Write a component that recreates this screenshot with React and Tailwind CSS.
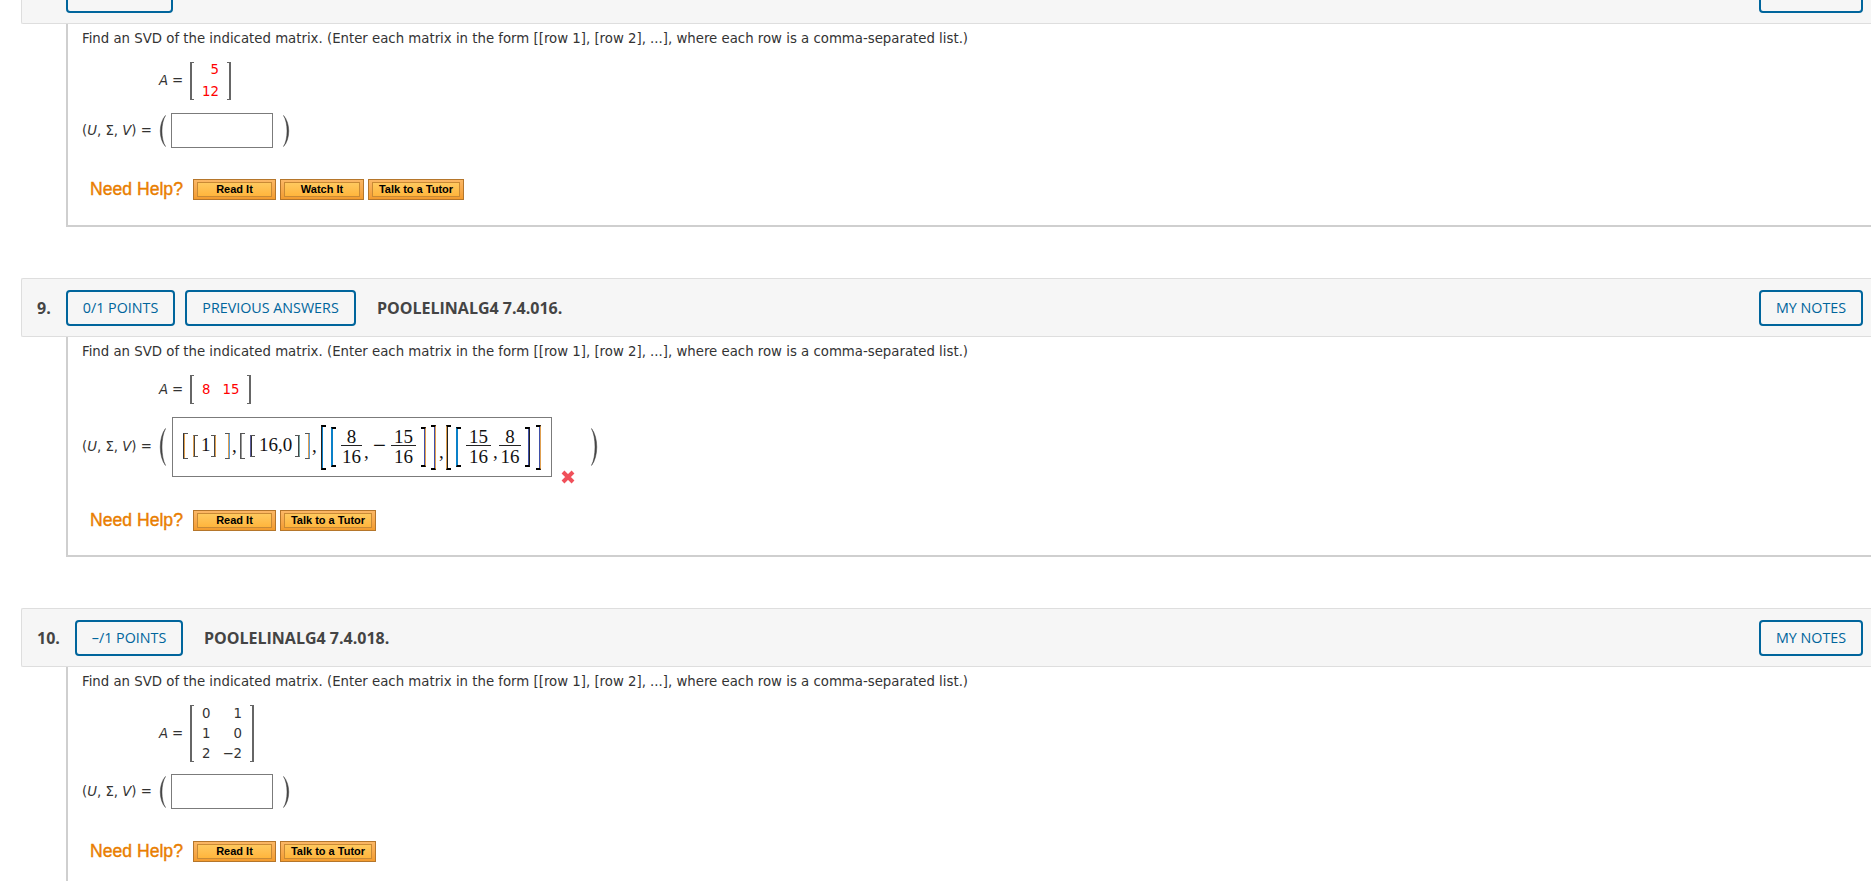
const sans = "font-['Open_Sans',sans-serif]";
const verdana = "font-['DejaVu_Sans',sans-serif]";

function OutlineButton({ children, className = "" }) {
  return (
    <div
      className={`h-[36px] flex items-center justify-center border-2 border-[#00659c] rounded-[4px] text-[#00659c] text-[14.3px] font-medium ${className}`}
    >
      {children}
    </div>
  );
}

function Header({ number, buttons, title, notes = "MY NOTES" }) {
  return (
    <div
      className={`h-[59px] ml-[21px] flex items-center bg-[#f6f6f6] border-t border-l border-b border-[#dedede] rounded-l-[2px] ${sans}`}
    >
      <div className="w-[44px] pl-[15px] text-[16px] font-bold text-[#444]">{number}</div>
      <div className="flex gap-[10px]">
        {buttons.map((b) => (
          <OutlineButton key={b.label} className={b.width}>
            {b.label}
          </OutlineButton>
        ))}
      </div>
      <div className="ml-[21px] text-[16px] font-bold text-[#444]">{title}</div>
      <OutlineButton className="ml-auto mr-[8px] w-[104px]">{notes}</OutlineButton>
    </div>
  );
}

function HelpButton({ label, width }) {
  return (
    <div className={`h-[21px] px-[3px] py-[2px] border border-[#b5762b] bg-gradient-to-b from-[#fbb765] to-[#f39c2d] ${width}`}>
      <div className="h-full flex items-center justify-center border border-[#c98a35] bg-gradient-to-b from-[#ffc95e] to-[#ffb53c] text-[11px] font-bold text-black font-['Liberation_Sans',sans-serif]">
        {label}
      </div>
    </div>
  );
}

function NeedHelp({ buttons }) {
  return (
    <div className="flex items-center ml-[22px]">
      <div className="w-[103px] text-[17.6px] leading-[21px] [-webkit-text-stroke:0.4px_#e97e00] font-['Liberation_Sans',sans-serif] text-[#e97e00]">
        Need Help?
      </div>
      <div className="flex gap-[4px]">
        {buttons.map((b) => (
          <HelpButton key={b.label} label={b.label} width={b.width} />
        ))}
      </div>
    </div>
  );
}

function Matrix({ rows, red, height, rowGap = "gap-y-[4px]" }) {
  return (
    <div className="flex items-stretch" style={{ height }}>
      <div className="w-[4px] border-l-2 border-t border-b border-[#666]" />
      <div
        className={`grid gap-x-[12px] ${rowGap} content-center items-center justify-items-end px-[8px] text-[13.3px] leading-[16px] ${red ? "text-[#f00]" : "text-[#333]"}`}
        style={{ gridTemplateColumns: `repeat(${rows[0].length}, auto)` }}
      >
        {rows.flat().map((c, i) => (
          <span key={i}>{c}</span>
        ))}
      </div>
      <div className="w-[4px] border-r-2 border-t border-b border-[#666]" />
    </div>
  );
}

function MatrixLine({ children }) {
  return (
    <div className="flex items-center pl-[91px] text-[13.3px] text-[#333]">
      <span className="italic w-[9px] mr-[4px]">A</span>
      <span className="w-[11px] mr-[7px]">=</span>
      {children}
    </div>
  );
}

function Paren({ side, height = 32 }) {
  const d =
    side === "l"
      ? "M8.5 0.5 C1.5 9 1.5 27 8.5 35.5 C3.8 27 3.8 9 8.5 0.5 Z"
      : "M1.5 0.5 C8.5 9 8.5 27 1.5 35.5 C6.2 27 6.2 9 1.5 0.5 Z";
  return (
    <svg width="10" height={height} viewBox="0 0 10 36" preserveAspectRatio="none" className="shrink-0">
      <path d={d} fill="#444" stroke="#444" strokeWidth="0.5" />
    </svg>
  );
}

function UsvLabel() {
  return (
    <span className="w-[75px] shrink-0 text-[13.3px] text-[#333] whitespace-nowrap">
      (<i>U</i>, Σ, <i>V</i>) =
    </span>
  );
}

function EmptyAnswer() {
  return (
    <div className="flex items-center">
      <UsvLabel />
      <Paren side="l" />
      <div className="w-[102px] h-[35px] ml-[4px] border border-[#7b7b7b] bg-white" />
      <div className="ml-[9px]"><Paren side="r" /></div>
    </div>
  );
}

// bracket stem is two 1px columns, to get the coloured fringe the picture has
function Bracket({ side, c, h, thick = false, className = "" }) {
  const caps = thick ? "border-t-2 border-b-2 border-t-black border-b-black" : "border-t border-b border-t-[#555] border-b-[#555]";
  const stem = side === "l" ? "border-l" : "border-r";
  const style =
    side === "l"
      ? { height: h, borderLeftColor: c[0], boxShadow: `inset 1px 0 0 ${c[1]}` }
      : { height: h, borderRightColor: c[1], boxShadow: `inset -1px 0 0 ${c[0]}` };
  return <div className={`w-[5px] shrink-0 ${caps} ${stem} ${className}`} style={style} />;
}

function Frac({ top, bottom, w, className = "" }) {
  return (
    <div className={`flex flex-col items-center shrink-0 -mt-[2px] leading-[19px] ${className}`} style={{ width: w }}>
      <span className="h-[18px]">{top}</span>
      <span className="w-full h-px bg-[#222]" />
      <span className="h-[19px] pt-[1px]">{bottom}</span>
    </div>
  );
}

function Comma({ className = "" }) {
  return <span className={`w-[5px] shrink-0 leading-[19px] ${className}`}>,</span>;
}

const orange = "#e0a050";
const blue = "#0a80c8";
const indigo = "#3f4fa8";

function FilledAnswer() {
  return (
    <div className="flex items-center relative">
      <UsvLabel />
      <Paren side="l" height={38} />
      <div className="w-[380px] h-[60px] ml-[5px] border border-[#7b7b7b] bg-white flex items-center pl-[10px] font-['Liberation_Serif',serif] text-[19px] text-[#111]">
        <div className="flex items-center -mt-[3px]">
          <Bracket side="l" c={["#333", orange]} h={26} />
          <Bracket side="l" c={[orange, "#444"]} h={22} className="ml-[5px]" />
          <span className="ml-[3px] w-[10px] shrink-0">1</span>
          <Bracket side="r" c={["#444", orange]} h={22} />
          <Bracket side="r" c={[orange, "#5aa0e0"]} h={26} className="ml-[9px]" />
          <Comma className="ml-[2px]" />
          <Bracket side="l" c={["#555", "#999"]} h={26} className="ml-[3px]" />
          <Bracket side="l" c={["#5a5a9a", "#333"]} h={22} className="ml-[5px]" />
          <span className="ml-[4px] w-[33px] shrink-0">16,0</span>
          <Bracket side="r" c={["#444", "#7aa"]} h={22} className="ml-[3px]" />
          <Bracket side="r" c={[orange, "#5aa0e0"]} h={26} className="ml-[5px]" />
          <Comma className="ml-[2px]" />
        </div>
        <Bracket side="l" c={["#222", blue]} h={45} thick className="ml-[4px]" />
        <Bracket side="l" c={[blue, blue]} h={40} thick className="ml-[5px]" />
        <Frac top="8" bottom="16" w={21} className="ml-[5px]" />
        <Comma className="ml-[2px] mt-[8px]" />
        <span className="ml-[4px] w-[13px] shrink-0 leading-[19px] text-[23px] -mt-[3px]">−</span>
        <Frac top="15" bottom="16" w={25} className="ml-[5px]" />
        <Bracket side="r" c={[indigo, orange]} h={40} thick className="ml-[5px]" />
        <Bracket side="r" c={[indigo, orange]} h={45} thick className="ml-[5px]" />
        <Comma className="ml-[3px] mt-[8px]" />
        <Bracket side="l" c={[orange, "#222"]} h={45} thick className="ml-[2px]" />
        <Bracket side="l" c={[blue, blue]} h={40} thick className="ml-[5px]" />
        <Frac top="15" bottom="16" w={25} className="ml-[5px]" />
        <Comma className="ml-[2px] mt-[8px]" />
        <Frac top="8" bottom="16" w={22} className="ml-[1px]" />
        <Bracket side="r" c={[indigo, "#222"]} h={40} thick className="ml-[4px]" />
        <Bracket side="r" c={[indigo, orange]} h={45} thick className="ml-[6px]" />
      </div>
      <svg width="14" height="14" viewBox="0 0 14 14" className="absolute left-[479px] top-[53px]">
        <path d="M2 2 L12 12 M12 2 L2 12" stroke="#f0505a" strokeWidth="4" />
      </svg>
      <div className="ml-[38px]"><Paren side="r" height={38} /></div>
    </div>
  );
}

function Body({ matrix, answer, help, h, answerMt, helpMt, border = true }) {
  return (
    <div className={`ml-[66px] border-l-2 border-[#cfcfcf] ${border ? "border-b-2" : ""} ${verdana}`} style={{ height: h }}>
      <div className="pl-[14px] pt-[5px] text-[13.3px] leading-[20px] text-[#333] whitespace-nowrap">
        Find an SVD of the indicated matrix. (Enter each matrix in the form [[row 1], [row 2], ...], where each row is a comma-separated list.)
      </div>
      <div className="mt-[13px]">
        <MatrixLine>{matrix}</MatrixLine>
      </div>
      <div className="pl-[14px]" style={{ marginTop: answerMt }}>{answer}</div>
      <div style={{ marginTop: helpMt }}>{help}</div>
    </div>
  );
}

const readIt = { label: "Read It", width: "w-[83px]" };
const watchIt = { label: "Watch It", width: "w-[84px]" };
const tutor = { label: "Talk to a Tutor", width: "w-[96px]" };

export default function App() {
  return (
    <div className="h-[881px] w-full overflow-hidden bg-white">
      <div className="-mt-[35px]">
        <Header number="" buttons={[{ label: "", width: "w-[107px]" }]} title="" notes="" />
        <Body
          h={203}
          answerMt={13}
          helpMt={31}
          matrix={<Matrix rows={[["5"], ["12"]]} red height={38} rowGap="gap-y-[6px]" />}
          answer={<EmptyAnswer />}
          help={<NeedHelp buttons={[readIt, watchIt, tutor]} />}
        />
        <div className="mt-[51px]">
          <Header
            number="9."
            buttons={[
              { label: "0/1 POINTS", width: "w-[109px]" },
              { label: "PREVIOUS ANSWERS", width: "w-[171px]" },
            ]}
            title="POOLELINALG4 7.4.016."
          />
        </div>
        <Body
          h={220}
          answerMt={13}
          helpMt={33}
          matrix={<Matrix rows={[["8", "15"]]} red height={29} />}
          answer={<FilledAnswer />}
          help={<NeedHelp buttons={[readIt, tutor]} />}
        />
        <div className="mt-[51px]">
          <Header
            number="10."
            buttons={[{ label: "–/1 POINTS", width: "w-[108px] ml-[9px]" }]}
            title="POOLELINALG4 7.4.018."
          />
        </div>
        <Body
          h={230}
          border={false}
          answerMt={12}
          helpMt={32}
          matrix={<Matrix rows={[["0", "1"], ["1", "0"], ["2", "−2"]]} height={57} />}
          answer={<EmptyAnswer />}
          help={<NeedHelp buttons={[readIt, tutor]} />}
        />
      </div>
    </div>
  );
}
